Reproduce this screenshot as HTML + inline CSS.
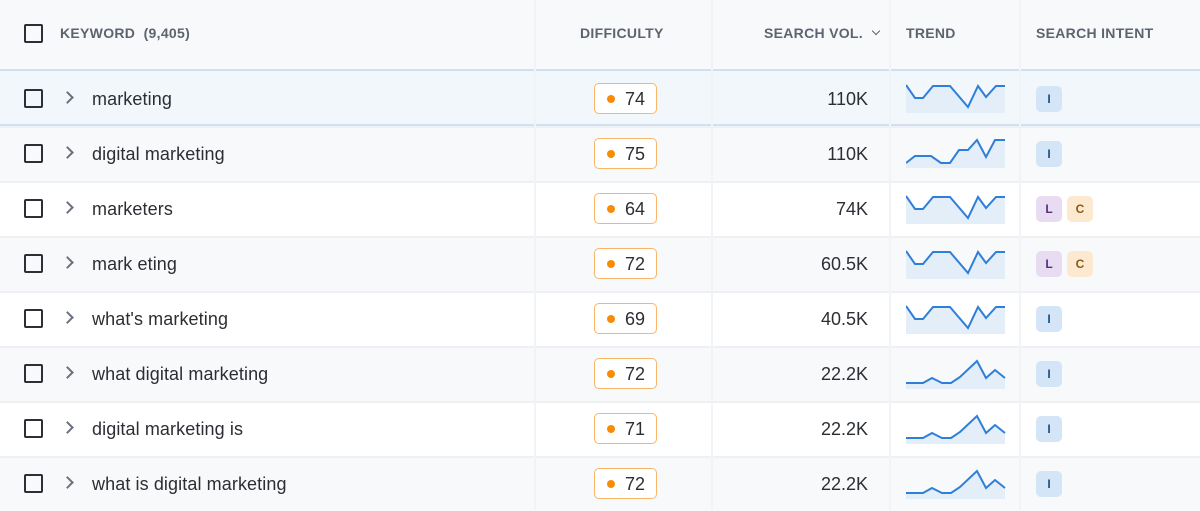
<!DOCTYPE html>
<html><head><meta charset="utf-8"><style>
*{margin:0;padding:0;box-sizing:border-box}
body{width:1200px;height:510px;overflow:hidden;background:#fff;font-family:"Liberation Sans",sans-serif;color:#2b2e33;position:relative}
.hdr{position:absolute;left:0;top:0;width:1200px;height:70px;background:#f8f9fb}
.h{position:absolute;top:25px;font-size:14px;font-weight:bold;color:#5c6470;letter-spacing:0.3px}
.vl{position:absolute;top:0;width:2px;height:510px;background:#f2f3f6}
.row{position:absolute;left:0;width:1200px;height:55px;border-top:2px solid #eef0f3}
.g{background:#f8f9fb}
.sel{background:#f2f7fc;border-top:2px solid #cfe0f2;border-bottom:2px solid #cfe0f2;height:57px}
.cb{position:absolute;left:24px;width:19px;height:19px;border:2px solid #2c2f36;border-radius:2px}
.chev{position:absolute;left:63px;width:9px;height:9px;border-right:2px solid #6a717c;border-top:2px solid #6a717c;transform:rotate(45deg)}
.kw{position:absolute;left:92px;font-size:18px;letter-spacing:0.1px}
.diff{position:absolute;left:594px;width:63px;height:31px;border:1.5px solid #f9b56a;border-radius:5px;background:#fff}
.diff i{position:absolute;left:12px;top:11px;width:8px;height:8px;border-radius:50%;background:#f88c07}
.diff span{position:absolute;left:30px;top:5px;font-size:18px}
.vol{position:absolute;right:332px;font-size:18px}
.tr{position:absolute;left:906px}
.b{position:absolute;width:26px;height:26px;border-radius:5px;font-size:12px;font-weight:bold;text-align:center;line-height:26px}
.I{background:#d3e5f7;color:#1f4f8a}
.L{background:#e8dcf3;color:#5a2f80}
.C{background:#fde9cf;color:#8a5a18}
</style></head><body>
<div class="hdr"></div>
<div class="cb" style="top:24px"></div>
<div class="h" style="left:60px">KEYWORD&nbsp; (9,405)</div>
<div class="h" style="left:580px">DIFFICULTY</div>
<div class="h" style="left:764px">SEARCH VOL.</div>
<div style="position:absolute;left:873px;top:28px;width:6px;height:6px;border-right:1.5px solid #5c6470;border-bottom:1.5px solid #5c6470;transform:rotate(45deg)"></div>
<div class="h" style="left:906px">TREND</div>
<div class="h" style="left:1036px">SEARCH INTENT</div>

<svg width="0" height="0" style="position:absolute"><defs>
<g id="A"><polygon points="0,14 9,27 17,27 27,15 44,15 62,36 72,15 80,26 90,15 99,15 99,42 0,42" fill="#e3eef9"/><polyline points="0,14 9,27 17,27 27,15 44,15 62,36 72,15 80,26 90,15 99,15" fill="none" stroke="#2f7fd8" stroke-width="2"/></g>
<g id="B"><polygon points="0,36 9,29 25,29 35,36 44,36 53,23 62,23 71,13 80,30 89,13 99,13 99,41 0,41" fill="#e3eef9"/><polyline points="0,36 9,29 25,29 35,36 44,36 53,23 62,23 71,13 80,30 89,13 99,13" fill="none" stroke="#2f7fd8" stroke-width="2"/></g>
<g id="C"><polygon points="0,37 17,37 26,32 36,37 45,37 54,31 71,15 80,32 89,24 99,32 99,43 0,43" fill="#e3eef9"/><polyline points="0,37 17,37 26,32 36,37 45,37 54,31 71,15 80,32 89,24 99,32" fill="none" stroke="#2f7fd8" stroke-width="2"/></g>
</defs></svg>

<div class="row sel" style="top:69px"></div>
<div class="row g" style="top:126px"></div>
<div class="row" style="top:181px"></div>
<div class="row g" style="top:236px"></div>
<div class="row" style="top:291px"></div>
<div class="row g" style="top:346px"></div>
<div class="row" style="top:401px"></div>
<div class="row g" style="top:456px"></div>

<div class="vl" style="left:534px"></div>
<div class="vl" style="left:711px"></div>
<div class="vl" style="left:889px"></div>
<div class="vl" style="left:1019px"></div>

<div class="cb" style="top:89px"></div><div class="chev" style="top:93px"></div><div class="kw" style="top:89px">marketing</div>
<div class="diff" style="top:83px"><i></i><span>74</span></div><div class="vol" style="top:89px">110K</div>
<svg class="tr" style="top:71px" width="100" height="45"><use href="#A"/></svg>
<div class="b I" style="left:1036px;top:86px">I</div>

<div class="cb" style="top:144px"></div><div class="chev" style="top:148px"></div><div class="kw" style="top:144px">digital marketing</div>
<div class="diff" style="top:138px"><i></i><span>75</span></div><div class="vol" style="top:144px">110K</div>
<svg class="tr" style="top:127px" width="100" height="45"><use href="#B"/></svg>
<div class="b I" style="left:1036px;top:141px">I</div>

<div class="cb" style="top:199px"></div><div class="chev" style="top:203px"></div><div class="kw" style="top:199px">marketers</div>
<div class="diff" style="top:193px"><i></i><span>64</span></div><div class="vol" style="top:199px">74K</div>
<svg class="tr" style="top:182px" width="100" height="45"><use href="#A"/></svg>
<div class="b L" style="left:1036px;top:196px">L</div><div class="b C" style="left:1067px;top:196px">C</div>

<div class="cb" style="top:254px"></div><div class="chev" style="top:258px"></div><div class="kw" style="top:254px">mark eting</div>
<div class="diff" style="top:248px"><i></i><span>72</span></div><div class="vol" style="top:254px">60.5K</div>
<svg class="tr" style="top:237px" width="100" height="45"><use href="#A"/></svg>
<div class="b L" style="left:1036px;top:251px">L</div><div class="b C" style="left:1067px;top:251px">C</div>

<div class="cb" style="top:309px"></div><div class="chev" style="top:313px"></div><div class="kw" style="top:309px">what's marketing</div>
<div class="diff" style="top:303px"><i></i><span>69</span></div><div class="vol" style="top:309px">40.5K</div>
<svg class="tr" style="top:292px" width="100" height="45"><use href="#A"/></svg>
<div class="b I" style="left:1036px;top:306px">I</div>

<div class="cb" style="top:364px"></div><div class="chev" style="top:368px"></div><div class="kw" style="top:364px">what digital marketing</div>
<div class="diff" style="top:358px"><i></i><span>72</span></div><div class="vol" style="top:364px">22.2K</div>
<svg class="tr" style="top:346px" width="100" height="45"><use href="#C"/></svg>
<div class="b I" style="left:1036px;top:361px">I</div>

<div class="cb" style="top:419px"></div><div class="chev" style="top:423px"></div><div class="kw" style="top:419px">digital marketing is</div>
<div class="diff" style="top:413px"><i></i><span>71</span></div><div class="vol" style="top:419px">22.2K</div>
<svg class="tr" style="top:401px" width="100" height="45"><use href="#C"/></svg>
<div class="b I" style="left:1036px;top:416px">I</div>

<div class="cb" style="top:474px"></div><div class="chev" style="top:478px"></div><div class="kw" style="top:474px">what is digital marketing</div>
<div class="diff" style="top:468px"><i></i><span>72</span></div><div class="vol" style="top:474px">22.2K</div>
<svg class="tr" style="top:456px" width="100" height="45"><use href="#C"/></svg>
<div class="b I" style="left:1036px;top:471px">I</div>
</body></html>
